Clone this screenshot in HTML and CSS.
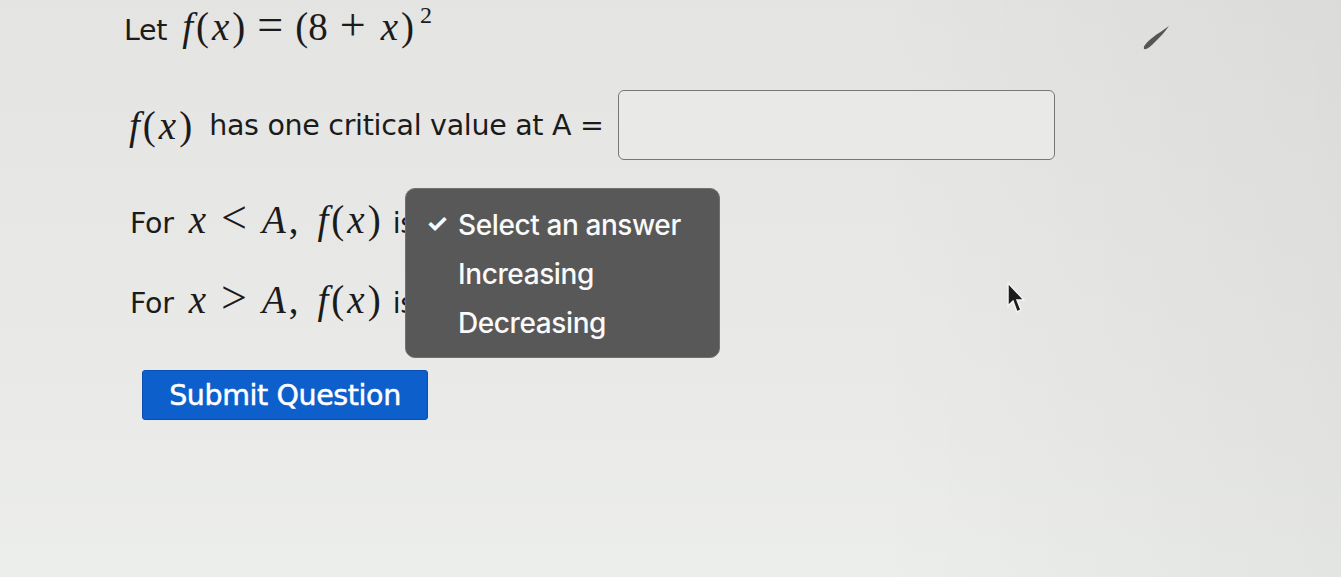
FILE: index.html
```html
<!DOCTYPE html>
<html lang="en">
<head>
    <meta charset="UTF-8">
    <title>Question</title>
    <link rel="stylesheet" href="styles.css">
</head>
<body>
    <div class="question">
        <p class="line first">
            <span class="txt">Let</span>
            <span class="math"><i>f</i>(<i>x</i>)<span class="op">=</span>(8<span class="op">+</span><i>x</i>)<sup>2</sup></span>
        </p>
        <p class="line crit">
            <span class="math"><i>f</i>(<i>x</i>)</span>
            <span class="txt">has one critical value at A =</span>
            <span class="answer-box"></span>
        </p>
        <p class="line dir">
            <span class="txt">For</span>
            <span class="math"><i>x</i><span class="op">&lt;</span><i>A</i>,<span class="sp"></span><i>f</i>(<i>x</i>)</span>
            <span class="txt">is</span>
        </p>
        <p class="line dir second">
            <span class="txt">For</span>
            <span class="math"><i>x</i><span class="op">&gt;</span><i>A</i>,<span class="sp"></span><i>f</i>(<i>x</i>)</span>
            <span class="txt">is</span>
        </p>
        <button class="submit">Submit Question</button>
    </div>

    <!-- open select menu -->
    <div class="menu">
        <div class="menu-item selected"><span class="check">&#10003;</span>Select an answer</div>
        <div class="menu-item">Increasing</div>
        <div class="menu-item">Decreasing</div>
    </div>

    <svg class="cursor" width="22" height="36" viewBox="0 0 22 36">
        <path d="M2 1 L2 24 L7 19 L11 30 L15 28 L11 18 L18 18 Z" fill="#1c1c1c" stroke="#f4f4f4" stroke-width="1.5"/>
    </svg>
    <svg class="smudge" width="32" height="28" viewBox="0 0 32 28">
        <path d="M29 2 C24 6 18 9 12 14 C7 18 3 22 4 25 C7 26 11 22 15 18 C20 13 25 8 29 2 Z" fill="#555"/>
    </svg>
</body>
</html>
```

FILE: styles.css
```css
body {
    margin: 0;
    width: 1341px;
    height: 577px;
    overflow: hidden;
    background:
        linear-gradient(90deg, rgba(0,0,0,0) 65%, rgba(0,0,0,0.04) 100%),
        linear-gradient(180deg, #e4e4e2 0%, #e8e8e6 50%, #eceeeb 100%);
    color: #1b1b1b;
    font-family: "DejaVu Sans", Verdana, sans-serif;
    position: relative;
}
.question {
    padding: 0 0 0 124px;
    display: flex;
    flex-direction: column;
    align-items: flex-start;
}
.line {
    margin: 0;
    display: flex;
    align-items: baseline;
    white-space: nowrap;
}
.txt {
    font-size: 28.5px;
    letter-spacing: -0.3px;
}
.math {
    font-family: "Liberation Serif", "Times New Roman", serif;
    font-size: 39px;
    margin: 0 12px;
}
.math i {
    font-style: italic;
    margin: 0 3px;
}
.math .op {
    font-size: 46px;
    line-height: 0;
    margin: 0 12px;
}
.math .sp {
    display: inline-block;
    width: 16px;
}
.math sup {
    font-size: 24px;
    font-style: normal;
    vertical-align: 17px;
    margin-left: 6px;
}
.first {
    height: 60px;
    margin-top: 2px;
}
.crit {
    height: 72px;
    margin-top: 27px;
    align-items: center;
}
.crit .math {
    margin: 0 17px 0 2px;
}
.answer-box {
    width: 435px;
    height: 68px;
    margin-left: 14px;
    border: 1.5px solid #777;
    border-radius: 6px;
    background: #e9e9e7;
}
.dir {
    height: 80px;
    padding-top: 36px;
}
.dir.second {
    padding-top: 0;
}
.dir .txt:first-child {
    margin-left: 6px;
}
.submit {
    margin: 13px 0 0 18px;
    width: 286px;
    height: 50px;
    border: 1px solid #0a4fb0;
    border-radius: 3px;
    background: #0d60cc;
    color: #fff;
    font-family: "DejaVu Sans", Verdana, sans-serif;
    font-size: 28.5px;
    letter-spacing: -0.4px;
    -webkit-text-stroke: 0.5px #fff;
    padding: 0;
}
.menu {
    position: absolute;
    left: 405px;
    top: 188px;
    width: 315px;
    height: 170px;
    box-sizing: border-box;
    background: #585858;
    border: 1px solid #707070;
    border-radius: 10px;
    padding-top: 19px;
    color: #fafafa;
    font-family: Inter, "Noto Sans", sans-serif;
    font-size: 28px;
    font-weight: 500;
}
.menu-item {
    height: 49px;
    padding-left: 52px;
    position: relative;
    letter-spacing: -0.4px;
}
.check {
    position: absolute;
    left: 20px;
    font-size: 25px;
    font-weight: 700;
}
.cursor {
    position: absolute;
    left: 1006px;
    top: 282px;
}
.smudge {
    position: absolute;
    left: 1140px;
    top: 24px;
}
```
